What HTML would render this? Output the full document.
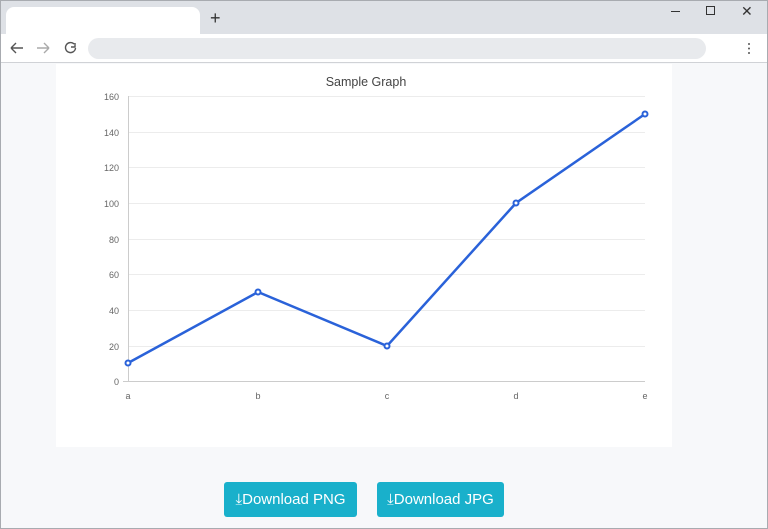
<!DOCTYPE html>
<html><head><style>
*{margin:0;padding:0;box-sizing:border-box}
body{width:768px;height:529px;overflow:hidden;background:#f7f8fa;font-family:"Liberation Sans",sans-serif;position:relative}
.frame{position:absolute;left:0;top:0;width:768px;height:529px;border:1px solid #a8abb0;pointer-events:none}
.tabs{position:absolute;left:0;top:0;width:768px;height:34px;background:#dee1e6}
.tab{position:absolute;left:6px;top:7px;width:194px;height:28px;background:#fff;border-radius:8px 8px 0 0}
.tool{position:absolute;left:0;top:34px;width:768px;height:29px;background:#fff;border-bottom:1px solid #d0d2d6}
.url{position:absolute;left:88px;top:4px;width:618px;height:21px;background:#e8eaed;border-radius:11px}
.card{position:absolute;left:56px;top:64px;width:616px;height:383px;background:#fff}
.btn{position:absolute;top:482px;height:35px;background:#19b0cb;color:#fff;border-radius:3px;font-size:15px;line-height:36px;text-align:center}
</style></head><body>
<div class="tabs"><div class="tab"></div>
<div style="position:absolute;left:210px;top:8px;font-size:18px;color:#333">+</div>
<div style="position:absolute;left:671px;top:11px;width:9px;height:1px;background:#333"></div>
<div style="position:absolute;left:706px;top:6px;width:9px;height:9px;border:1px solid #333"></div>
<div style="position:absolute;left:741px;top:3px;font-size:14px;color:#333">✕</div>
</div>
<div class="tool">
<svg width="768" height="29" style="position:absolute;left:0;top:0" fill="none" stroke-width="1.4">
<path d="M11 14h12M11 14l5-5M11 14l5 5" stroke="#555"/>
<path d="M37 14h12M49 14l-5-5M49 14l-5 5" stroke="#aaa"/>
<path d="M74 10a5 5 0 1 0 1.5 4M75 9v4h-4" stroke="#555"/>
<circle cx="749" cy="10" r="1" fill="#555" stroke="none"/><circle cx="749" cy="14.5" r="1" fill="#555" stroke="none"/><circle cx="749" cy="19" r="1" fill="#555" stroke="none"/>
</svg>
<div class="url"></div></div>
<div class="card"></div>
<svg width="768" height="529" style="position:absolute;left:0;top:0" font-family="Liberation Sans" font-size="9" fill="#666">
<text x="366" y="86" text-anchor="middle" font-size="12.5" fill="#444">Sample Graph</text>
<g stroke="#ececec" stroke-width="1">
<path d="M128 96.5H645M128 132.5H645M128 167.5H645M128 203.5H645M128 239.5H645M128 274.5H645M128 310.5H645M128 346.5H645"/>
</g>
<path d="M128.5 96V381M123 381.5H645" stroke="#ccc"/>
<g text-anchor="end">
<text x="119" y="100">160</text><text x="119" y="136">140</text><text x="119" y="171">120</text><text x="119" y="207">100</text><text x="119" y="243">80</text><text x="119" y="278">60</text><text x="119" y="314">40</text><text x="119" y="350">20</text><text x="119" y="385">0</text>
</g>
<g text-anchor="middle">
<text x="128" y="399">a</text><text x="258" y="399">b</text><text x="387" y="399">c</text><text x="516" y="399">d</text><text x="645" y="399">e</text>
</g>
<polyline points="128,363 258,292 387,346 516,203 645,114" fill="none" stroke="#2a62d9" stroke-width="2.5"/>
<g fill="#fff" stroke="#2a62d9" stroke-width="2">
<circle cx="128" cy="363" r="2.5"/><circle cx="258" cy="292" r="2.5"/><circle cx="387" cy="346" r="2.5"/><circle cx="516" cy="203" r="2.5"/><circle cx="645" cy="114" r="2.5"/>
</g>
</svg>
<div class="btn" style="left:224px;width:133px">⤓Download PNG</div>
<div class="btn" style="left:377px;width:127px">⤓Download JPG</div>
<div class="frame"></div>
</body></html>
